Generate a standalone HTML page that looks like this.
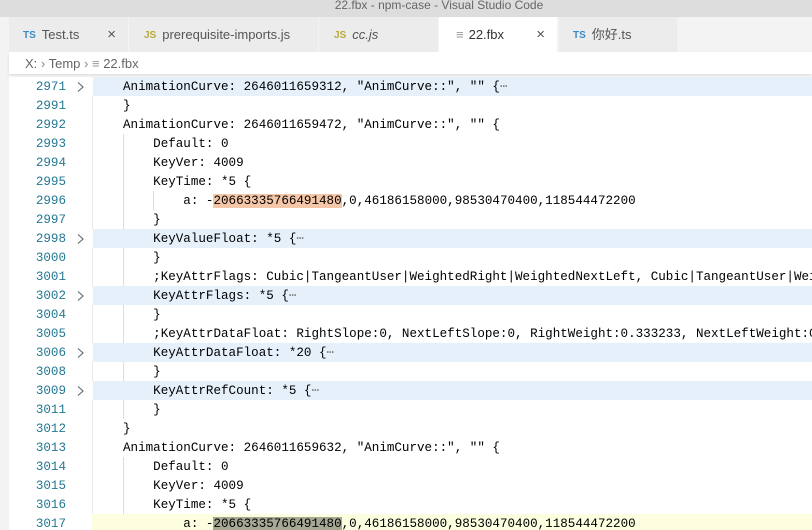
<!DOCTYPE html>
<html><head><meta charset="utf-8"><style>
*{margin:0;padding:0;box-sizing:border-box}
body{width:812px;height:530px;overflow:hidden;background:#fff;font-family:"Liberation Sans","Noto Sans CJK SC",sans-serif;position:relative}
.title{position:absolute;left:0;top:0;width:812px;height:17px;background:#dddddd;color:#666;font-size:12px;text-align:center;line-height:10px;overflow:hidden}
.title span{position:relative;left:33px}
.tabs{position:absolute;left:0;top:17px;width:812px;height:35px;background:#f3f3f3}
.tab{position:absolute;top:0;height:35px;background:#ececec;border-right:1px solid #f3f3f3;font-size:13px;color:#555;line-height:36px}
.tab .ic{font-size:10px;font-weight:bold;margin-right:6px;position:relative;top:-1px}
.ts{color:#3a8ac4}.js{color:#b9a93a}
.tab .x{position:absolute;right:12px;top:0;color:#555;font-size:15px}
.left{position:absolute;left:0;top:17px;width:9px;height:513px;background:#f3f3f3}
.bc{position:absolute;left:9px;top:52px;width:803px;height:22px;background:#fff;font-size:13px;color:#666;line-height:23px;padding-left:16px;box-shadow:0 2px 3px #ddd}
.code{position:absolute;left:9px;top:77px;width:803px;height:453px;overflow:hidden;font-family:"Liberation Mono",monospace;font-size:12.57px}
.ln{height:19px;line-height:21px;position:relative;white-space:pre;color:#000}
.ln .n{position:absolute;left:0;width:57px;text-align:right;color:#237893}
.ln .f{position:absolute;left:67px;top:5px;width:9px;height:10px}
.ln .t{position:absolute;left:114px}
.hl{background:linear-gradient(to right,#fff 84px,#e5f0fb 84px)}
.yl{background:linear-gradient(to right,#fff 83px,#fdfde0 83px)}
.gut{position:absolute;left:92px;top:74px;width:1px;height:456px;background:#e8e8e8}
.sel{background:#f5c6a8}.sel2{background:#a6a894}
.dots{color:#888}
.g{position:absolute;width:1px;background:#dcdcdc}
</style></head><body>
<div class="title"><span>22.fbx - npm-case - Visual Studio Code</span></div>
<div class="tabs">
<div class="tab" style="left:9px;width:120px;padding-left:14px"><span class="ic ts">TS</span>Test.ts<span class="x">×</span></div>
<div class="tab" style="left:129px;width:190px;padding-left:15px"><span class="ic js">JS</span>prerequisite-imports.js</div>
<div class="tab" style="left:319px;width:120px;padding-left:15px"><span class="ic js">JS</span><i>cc.js</i></div>
<div class="tab" style="left:439px;width:119px;padding-left:17px;background:#fff;color:#333"><span style="color:#999;margin-right:5px">≡</span>22.fbx<span class="x">×</span></div>
<div class="tab" style="left:559px;width:119px;padding-left:14px"><span class="ic ts">TS</span>你好.ts</div>
</div>
<div class="left"></div>
<div class="bc">X: <span style="color:#888">›</span> Temp <span style="color:#888">›</span> <span style="color:#999">≡</span> 22.fbx</div>
<div class="gut"></div>
<div class="g" style="left:123px;top:134px;height:285px"></div>
<div class="g" style="left:153px;top:191px;height:19px"></div>
<div class="g" style="left:123px;top:457px;height:73px"></div>
<div class="g" style="left:153px;top:514px;height:16px"></div>
<div class="code">
<div class="ln hl"><span class="n">2971</span><svg class="f" viewBox="0 0 9 10"><path d="M2 0.5L7 5L2 9.5" fill="none" stroke="#666" stroke-width="1.1"/></svg><span class="t">AnimationCurve: 2646011659312, "AnimCurve::", "" {<span class="dots">⋯</span></span></div>
<div class="ln"><span class="n">2991</span><span class="t">}</span></div>
<div class="ln"><span class="n">2992</span><span class="t">AnimationCurve: 2646011659472, "AnimCurve::", "" {</span></div>
<div class="ln"><span class="n">2993</span><span class="t">    Default: 0</span></div>
<div class="ln"><span class="n">2994</span><span class="t">    KeyVer: 4009</span></div>
<div class="ln"><span class="n">2995</span><span class="t">    KeyTime: *5 {</span></div>
<div class="ln"><span class="n">2996</span><span class="t">        a: -<span class="sel">20663335766491480</span>,0,46186158000,98530470400,118544472200</span></div>
<div class="ln"><span class="n">2997</span><span class="t">    }</span></div>
<div class="ln hl"><span class="n">2998</span><svg class="f" viewBox="0 0 9 10"><path d="M2 0.5L7 5L2 9.5" fill="none" stroke="#666" stroke-width="1.1"/></svg><span class="t">    KeyValueFloat: *5 {<span class="dots">⋯</span></span></div>
<div class="ln"><span class="n">3000</span><span class="t">    }</span></div>
<div class="ln"><span class="n">3001</span><span class="t">    ;KeyAttrFlags: Cubic|TangeantUser|WeightedRight|WeightedNextLeft, Cubic|TangeantUser|WeightedRight</span></div>
<div class="ln hl"><span class="n">3002</span><svg class="f" viewBox="0 0 9 10"><path d="M2 0.5L7 5L2 9.5" fill="none" stroke="#666" stroke-width="1.1"/></svg><span class="t">    KeyAttrFlags: *5 {<span class="dots">⋯</span></span></div>
<div class="ln"><span class="n">3004</span><span class="t">    }</span></div>
<div class="ln"><span class="n">3005</span><span class="t">    ;KeyAttrDataFloat: RightSlope:0, NextLeftSlope:0, RightWeight:0.333233, NextLeftWeight:0.3</span></div>
<div class="ln hl"><span class="n">3006</span><svg class="f" viewBox="0 0 9 10"><path d="M2 0.5L7 5L2 9.5" fill="none" stroke="#666" stroke-width="1.1"/></svg><span class="t">    KeyAttrDataFloat: *20 {<span class="dots">⋯</span></span></div>
<div class="ln"><span class="n">3008</span><span class="t">    }</span></div>
<div class="ln hl"><span class="n">3009</span><svg class="f" viewBox="0 0 9 10"><path d="M2 0.5L7 5L2 9.5" fill="none" stroke="#666" stroke-width="1.1"/></svg><span class="t">    KeyAttrRefCount: *5 {<span class="dots">⋯</span></span></div>
<div class="ln"><span class="n">3011</span><span class="t">    }</span></div>
<div class="ln"><span class="n">3012</span><span class="t">}</span></div>
<div class="ln"><span class="n">3013</span><span class="t">AnimationCurve: 2646011659632, "AnimCurve::", "" {</span></div>
<div class="ln"><span class="n">3014</span><span class="t">    Default: 0</span></div>
<div class="ln"><span class="n">3015</span><span class="t">    KeyVer: 4009</span></div>
<div class="ln"><span class="n">3016</span><span class="t">    KeyTime: *5 {</span></div>
<div class="ln yl"><span class="n">3017</span><span class="t">        a: -<span class="sel2">20663335766491480</span>,0,46186158000,98530470400,118544472200</span></div>
</div>
</body></html>
